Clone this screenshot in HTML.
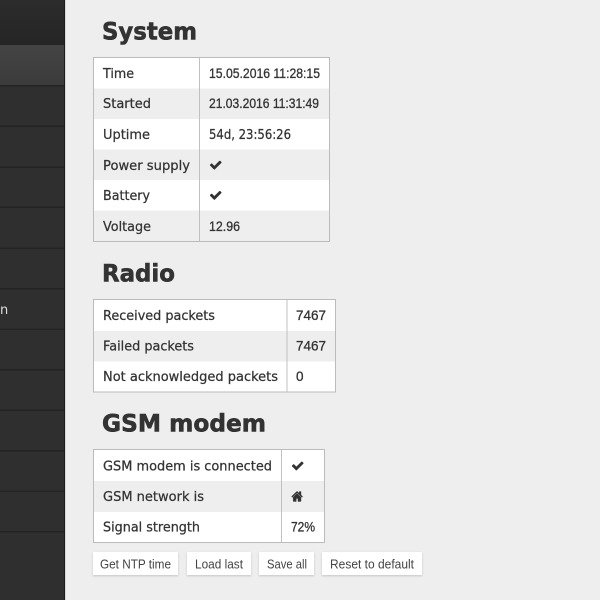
<!DOCTYPE html>
<html><head><meta charset="utf-8"><style>
html,body{margin:0;padding:0;width:600px;height:600px;overflow:hidden;background:#eee}
svg{display:block;position:absolute;left:0;top:0}
.t{font:13px "DejaVu Sans",sans-serif;fill:#333;stroke:#333;stroke-width:.25}
.v{font:13.5px "Liberation Sans",sans-serif;fill:#333;stroke:#333;stroke-width:.3}
.h{font:bold 24px "DejaVu Sans",sans-serif;fill:#333;stroke:#333;stroke-width:.6}
.b{font:13px "Liberation Sans",sans-serif;fill:#444}
</style></head><body>
<svg width="600" height="600" viewBox="0 0 600 600" xmlns="http://www.w3.org/2000/svg">
<defs>
<linearGradient id="a" x1="0" y1="0" x2="0" y2="1"><stop offset="0" stop-color="#444"/><stop offset="1" stop-color="#3b3b3b"/></linearGradient>
<linearGradient id="t" x1="0" y1="0" x2="0" y2="1"><stop offset="0" stop-color="#2c2c2c"/><stop offset="1" stop-color="#252525"/></linearGradient>
<filter id="s" x="-10%" y="-20%" width="120%" height="150%"><feDropShadow dx="0" dy="1" stdDeviation="1" flood-color="#000" flood-opacity=".18"/></filter>
<path id="c" d="M1671 566q0 40-28 68l-724 724-136 136q-28 28-68 28t-68-28l-136-136-362-362q-28-28-28-68t28-68l136-136q28-28 68-28t68 28l294 295 656-657q28-28 68-28t68 28l136 136q28 28 28 68z"/>
</defs>
<rect width="65" height="600" fill="#2f2f2f"/>
<rect width="65" height="45" fill="url(#t)"/>
<rect y="45" width="65" height="40" fill="url(#a)"/>
<g fill="#232323">
<rect y="85" width="65" height="1.5"/><rect y="125.500" width="65" height="1.5"/><rect y="166.500" width="65" height="1.5"/><rect y="206.500" width="65" height="1.500"/><rect y="247.500" width="65" height="1.500"/><rect y="288" width="65" height="1.500"/><rect y="328.500" width="65" height="1.500"/><rect y="369" width="65" height="1.500"/><rect y="409.500" width="65" height="1.500"/><rect y="450" width="65" height="1.500"/><rect y="490.500" width="65" height="1.500"/><rect y="531" width="65" height="1.500"/>
</g>
<rect x="64" width="1" height="600" fill="#1c1c1c"/>
<rect x="65" width="1" height="600" fill="#d8d8d8"/>
<text x="0" y="314" font-family="DejaVu Sans" font-size="13" fill="#ddd">n</text>

<text class="h" x="102" y="39.500" textLength="95" lengthAdjust="spacingAndGlyphs">System</text>
<rect x="93.500" y="57.500" width="236" height="184" fill="#fff" stroke="#bbb"/>
<rect x="94" y="88.500" width="235" height="30.500" fill="#eee"/>
<rect x="94" y="149.500" width="235" height="30.500" fill="#eee"/>
<rect x="94" y="210.500" width="235" height="30.500" fill="#eee"/>
<rect x="199" y="58" width="1" height="183" fill="#c0c0c0"/>
<text class="t" x="103" y="78" textLength="31" lengthAdjust="spacingAndGlyphs">Time</text>
<text class="t" x="103" y="108" textLength="48" lengthAdjust="spacingAndGlyphs">Started</text>
<text class="t" x="103" y="139" textLength="47" lengthAdjust="spacingAndGlyphs">Uptime</text>
<text class="t" x="103" y="170" textLength="87" lengthAdjust="spacingAndGlyphs">Power supply</text>
<text class="t" x="103" y="200" textLength="47" lengthAdjust="spacingAndGlyphs">Battery</text>
<text class="t" x="103" y="231" textLength="48" lengthAdjust="spacingAndGlyphs">Voltage</text>
<text class="v" x="209" y="78" textLength="111" lengthAdjust="spacingAndGlyphs">15.05.2016 11:28:15</text>
<text class="v" x="209" y="108" textLength="110" lengthAdjust="spacingAndGlyphs">21.03.2016 11:31:49</text>
<text class="t" x="209" y="139" textLength="82" lengthAdjust="spacingAndGlyphs">54d, 23:56:26</text>
<use href="#c" transform="translate(209 158.200) scale(.0075)" fill="#333"/>
<use href="#c" transform="translate(209 188.400) scale(.0075)" fill="#333"/>
<text class="v" x="209" y="231" textLength="31" lengthAdjust="spacingAndGlyphs">12.96</text>

<text class="h" x="102" y="281.500" textLength="73" lengthAdjust="spacingAndGlyphs">Radio</text>
<rect x="93.500" y="299.500" width="242" height="92.500" fill="#fff" stroke="#bbb"/>
<rect x="94" y="331" width="241" height="30.500" fill="#eee"/>
<rect x="286.500" y="300" width="1" height="92" fill="#c0c0c0"/>
<text class="t" x="103" y="320" textLength="112" lengthAdjust="spacingAndGlyphs">Received packets</text>
<text class="t" x="103" y="350.500" textLength="91" lengthAdjust="spacingAndGlyphs">Failed packets</text>
<text class="t" x="103" y="381" textLength="175" lengthAdjust="spacingAndGlyphs">Not acknowledged packets</text>
<text class="v" x="296" y="320" textLength="30" lengthAdjust="spacingAndGlyphs">7467</text>
<text class="v" x="296" y="350.500" textLength="30" lengthAdjust="spacingAndGlyphs">7467</text>
<text class="v" x="296" y="381">0</text>

<text class="h" x="102" y="431.500" textLength="164" lengthAdjust="spacingAndGlyphs">GSM modem</text>
<rect x="93.500" y="449.500" width="231" height="93" fill="#fff" stroke="#bbb"/>
<rect x="94" y="481" width="230" height="31" fill="#eee"/>
<rect x="281" y="450" width="1" height="92" fill="#c0c0c0"/>
<text class="t" x="103" y="470.500" textLength="169" lengthAdjust="spacingAndGlyphs">GSM modem is connected</text>
<text class="t" x="103" y="501" textLength="101" lengthAdjust="spacingAndGlyphs">GSM network is</text>
<text class="t" x="103" y="531.500" textLength="97" lengthAdjust="spacingAndGlyphs">Signal strength</text>
<use href="#c" transform="translate(291 459) scale(.0075)" fill="#333"/>
<path transform="translate(291 489.500) scale(.0068 .0078)" fill="#333" stroke="#333" stroke-width="50" d="M1472 992v480q0 26-19 45t-45 19h-384v-384h-256v384h-384q-26 0-45-19t-19-45v-480q0-1 .5-3t.5-3l575-474 575 474q1 2 1 6zm223-69l-62 74q-8 9-21 11h-3q-13 0-21-7l-692-577-692 577q-12 8-24 7-13-2-21-11l-62-74q-8-10-7-23.500t11-21.500l719-599q32-26 76-26t76 26l244 204v-195q0-14 9-23t23-9h192q14 0 23 9t9 23v408l219 182q10 8 11 21.500t-7 23.500z"/>
<text class="v" x="291" y="531.500" textLength="24" lengthAdjust="spacingAndGlyphs">72%</text>

<g fill="#fff" filter="url(#s)">
<rect x="93" y="552" width="85" height="23"/>
<rect x="187" y="552" width="64" height="23"/>
<rect x="259" y="552" width="55" height="23"/>
<rect x="322" y="552" width="100" height="23"/>
</g>
<text class="b" x="100" y="568.500" textLength="71" lengthAdjust="spacingAndGlyphs">Get NTP time</text>
<text class="b" x="195" y="568.500" textLength="48" lengthAdjust="spacingAndGlyphs">Load last</text>
<text class="b" x="267" y="568.500" textLength="40" lengthAdjust="spacingAndGlyphs">Save all</text>
<text class="b" x="330" y="568.500" textLength="84" lengthAdjust="spacingAndGlyphs">Reset to default</text>
</svg>
</body></html>
